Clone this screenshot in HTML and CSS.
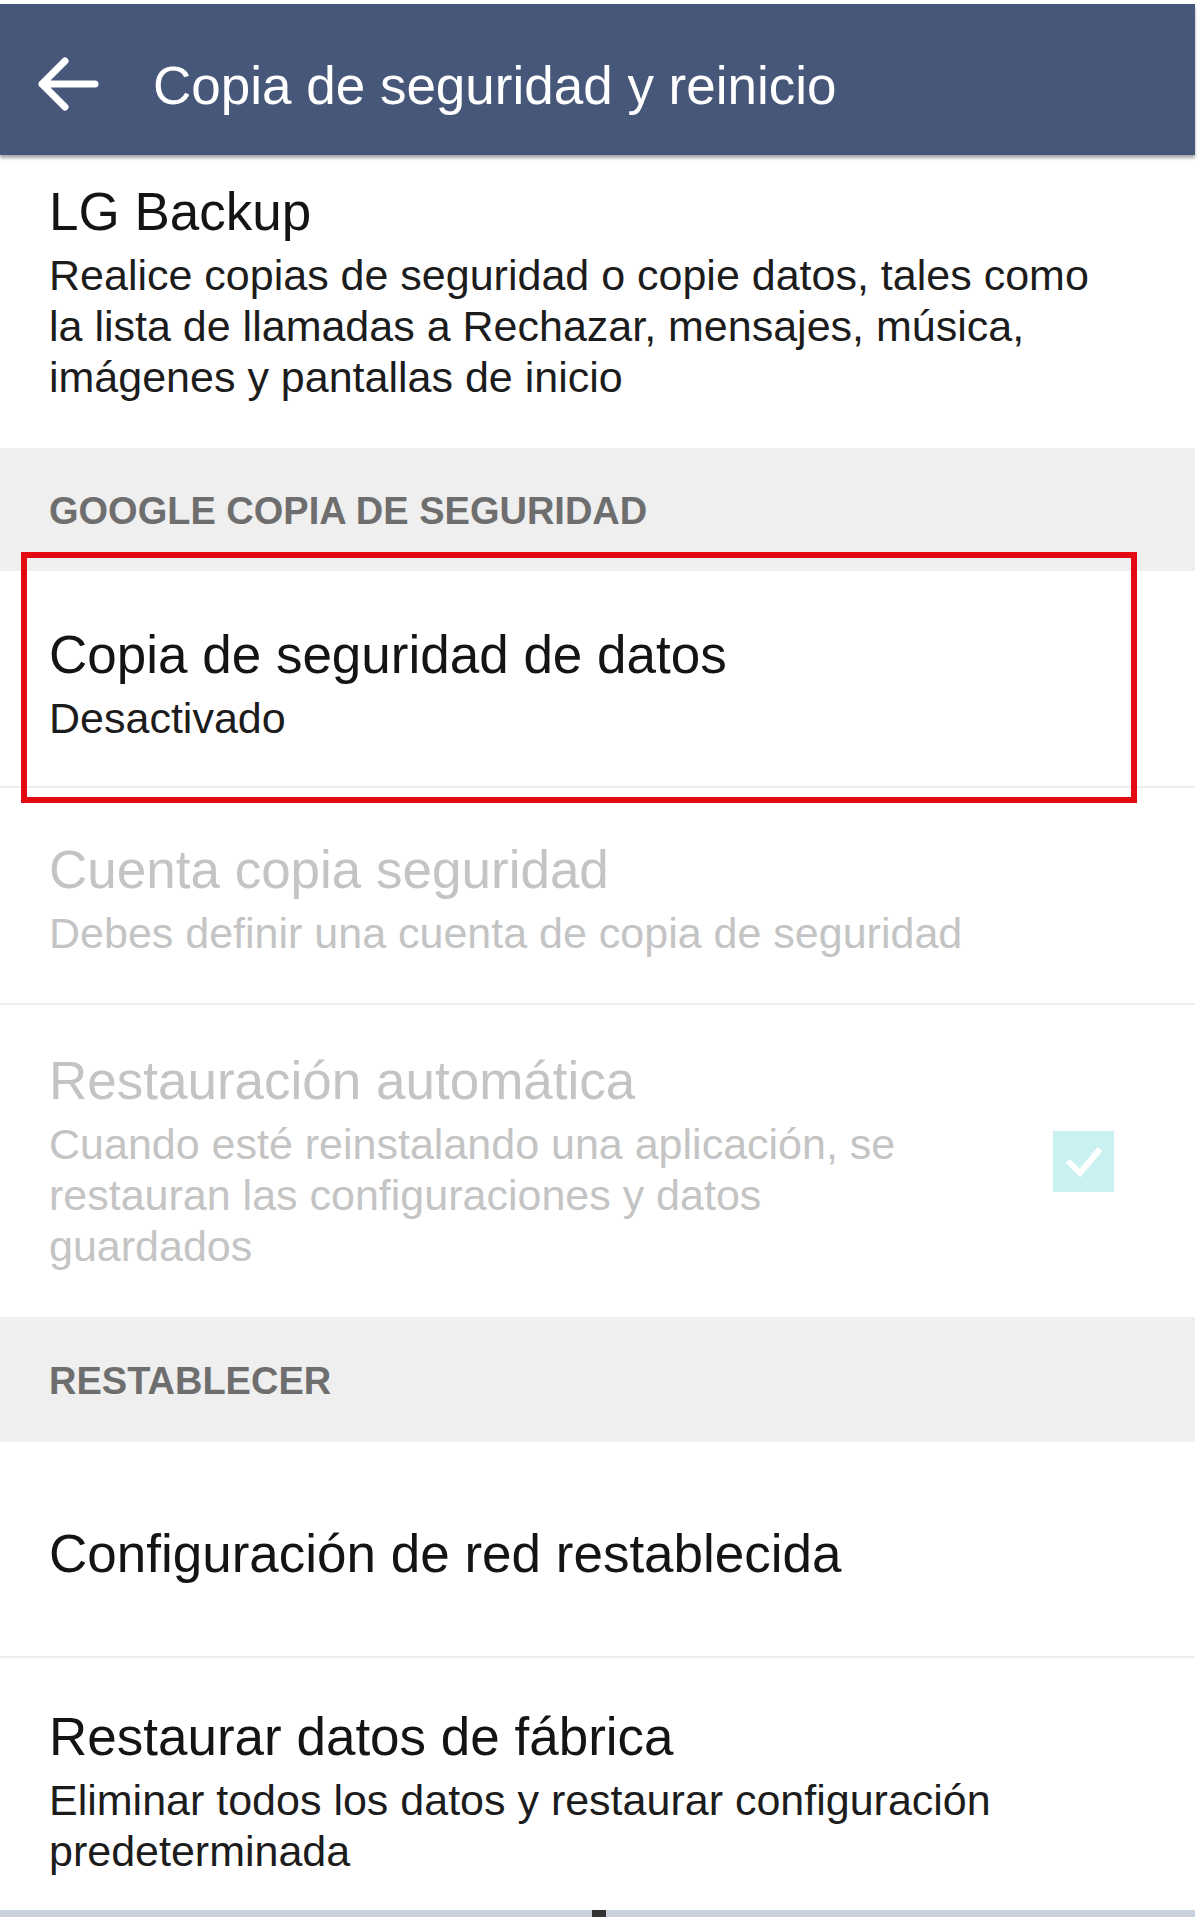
FILE: index.html
```html
<!DOCTYPE html>
<html lang="es">
<head>
  <meta charset="UTF-8" />
  <meta name="viewport" content="width=device-width, initial-scale=1.0"/>
  <title>Copia de seguridad y reinicio</title>
  <link rel="stylesheet" href="styles.css">
</head>
<body>
<div class="screen">
  <div class="topbar">
    <svg class="back" viewBox="0 0 64 54" width="64" height="54">
      <path d="M7 27 H60 M30 4 L7 27 L30 50" fill="none" stroke="#fff" stroke-width="7" stroke-linecap="round" stroke-linejoin="round"/>
    </svg>
    <h1>Copia de seguridad y reinicio</h1>
  </div>

  <div class="item item-lg">
    <div class="text">
      <div class="title">LG Backup</div>
      <div class="desc">Realice copias de seguridad o copie datos, tales como<br>la lista de llamadas a Rechazar, mensajes, música,<br>imágenes y pantallas de inicio</div>
    </div>
  </div>

  <div class="section">GOOGLE COPIA DE SEGURIDAD</div>

  <div class="item item-backup divided">
    <div class="text">
      <div class="title">Copia de seguridad de datos</div>
      <div class="desc">Desactivado</div>
    </div>
    <div class="highlight"></div>
  </div>

  <div class="item item-account divided disabled">
    <div class="text">
      <div class="title">Cuenta copia seguridad</div>
      <div class="desc">Debes definir una cuenta de copia de seguridad</div>
    </div>
  </div>

  <div class="item item-restore disabled">
    <div class="text">
      <div class="title">Restauración automática</div>
      <div class="desc">Cuando esté reinstalando una aplicación, se<br>restauran las configuraciones y datos<br>guardados</div>
    </div>
    <div class="check">
      <svg viewBox="0 0 60 60" width="60" height="60">
        <path d="M14 30 L26 42 L46 18" fill="none" stroke="#fff" stroke-width="6"/>
      </svg>
    </div>
  </div>

  <div class="section section-reset">RESTABLECER</div>

  <div class="item item-network divided">
    <div class="text">
      <div class="title">Configuración de red restablecida</div>
    </div>
  </div>

  <div class="item item-factory">
    <div class="text">
      <div class="title">Restaurar datos de fábrica</div>
      <div class="desc">Eliminar todos los datos y restaurar configuración<br>predeterminada</div>
    </div>
  </div>

  <div class="navbar"><span class="nav-mark"></span></div>
</div>
</body>
</html>
```

FILE: styles.css
```css
body {
  margin: 0;
  padding: 0;
  background-color: #fff;
  font-family: 'Liberation Sans', Arial, sans-serif;
  overflow: hidden;
}
.screen {
  width: 1195px;
  padding-top: 4px;
  background-color: #fff;
  position: relative;
}
.topbar {
  display: flex;
  align-items: center;
  height: 151px;
  background-color: #46577a;
  box-shadow: 0 3px 3px rgba(0, 0, 0, 0.35);
  padding-left: 35px;
  box-sizing: border-box;
  position: relative;
  z-index: 2;
}
.topbar .back {
  margin-top: 8px;
}
.topbar h1 {
  margin: 12px 0 0 54px;
  color: #fff;
  font-size: 53px;
  font-weight: 400;
}
.item {
  display: flex;
  align-items: center;
  padding: 0 81px 0 49px;
  position: relative;
  box-sizing: border-box;
}
.item .text {
  flex: 1;
}
.divided {
  border-bottom: 2px solid #ededed;
}
.title {
  font-size: 53px;
  line-height: 62px;
  color: #141414;
}
.desc {
  font-size: 43px;
  line-height: 51px;
  margin-top: 7px;
  color: #1c1c1c;
}
.disabled .title,
.disabled .desc {
  color: #c4c4c4;
}
.item-lg {
  height: 293px;
  padding-bottom: 20px;
}
.item-backup {
  height: 217px;
  padding-top: 10px;
}
.item-account {
  height: 217px;
  padding-top: 6px;
}
.item-restore {
  height: 312px;
}
.item-network {
  height: 216px;
  padding-top: 10px;
}
.item-factory {
  height: 252px;
  padding-top: 14px;
}
.section {
  height: 123px;
  display: flex;
  align-items: center;
  padding: 4px 0 0 49px;
  box-sizing: border-box;
  background-color: #efefef;
  color: #6e6e6e;
  font-size: 38px;
  font-weight: 700;
}
.section-reset {
  height: 125px;
}
.highlight {
  position: absolute;
  left: 21px;
  top: -19px;
  width: 1116px;
  height: 251px;
  border: 6px solid #e50914;
  box-sizing: border-box;
}
.check {
  width: 61px;
  height: 61px;
  background-color: #c9f1f2;
  display: flex;
  align-items: center;
  justify-content: center;
}
.navbar {
  height: 7px;
  background-color: #c9d1de;
  position: relative;
}
.nav-mark {
  position: absolute;
  left: 592px;
  top: 0;
  width: 14px;
  height: 7px;
  background-color: #333;
}
```
